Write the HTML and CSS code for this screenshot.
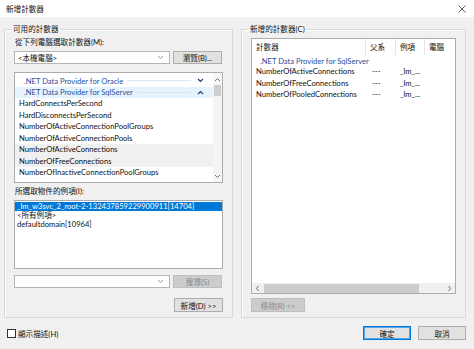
FILE: index.html
```html
<!DOCTYPE html>
<html lang="zh-Hant">
<head>
	<meta charset="UTF-8">
	<title>新增計數器</title>
	<link rel="stylesheet" href="styles.css">
</head>
<body>
	<div class="titlebar">
		<span>新增計數器</span>
		<svg class="close" width="8" height="8" viewBox="0 0 8 8"><path d="M0.5 0.5L7.5 7.5M7.5 0.5L0.5 7.5" stroke="#333" stroke-width="0.8"/></svg>
	</div>

	<div class="main">
		<!-- 左邊：可用的計數器 -->
		<fieldset class="group group-left">
			<legend>可用的計數器</legend>
			<div class="label first">從下列電腦選取計數器(M):</div>
			<div class="row">
				<div class="combo">
					<span>&lt;本機電腦&gt;</span>
					<svg width="7" height="5" viewBox="0 0 7 5"><path d="M1 1L3.5 3.5L6 1" fill="none" stroke="#777" stroke-width="0.8"/></svg>
				</div>
				<div class="btn">瀏覽(B)...</div>
			</div>

			<div class="counters">
				<div class="rows">
					<div class="ghead">
						<span>.NET Data Provider for Oracle</span>
						<i class="gline"></i>
						<svg width="7" height="5" viewBox="0 0 7 5"><path d="M1 1L3.5 3.5L6 1" fill="none" stroke="#1e3a70" stroke-width="1.1"/></svg>
					</div>
					<div class="ghead hover">
						<span>.NET Data Provider for SqlServer</span>
						<i class="gline"></i>
						<svg width="7" height="5" viewBox="0 0 7 5"><path d="M1 4L3.5 1.5L6 4" fill="none" stroke="#1e3a70" stroke-width="1.1"/></svg>
					</div>
					<div class="item">HardConnectsPerSecond</div>
					<div class="item">HardDisconnectsPerSecond</div>
					<div class="item">NumberOfActiveConnectionPoolGroups</div>
					<div class="item">NumberOfActiveConnectionPools</div>
					<div class="item sel">NumberOfActiveConnections</div>
					<div class="item sel">NumberOfFreeConnections</div>
					<div class="item">NumberOfInactiveConnectionPoolGroups</div>
				</div>
				<div class="vscroll">
					<svg width="7" height="5" viewBox="0 0 7 5"><path d="M1 4L3.5 1.5L6 4" fill="none" stroke="#606060" stroke-width="0.9"/></svg>
					<div class="vthumb"></div>
					<div class="vtrack"></div>
					<svg width="7" height="5" viewBox="0 0 7 5"><path d="M1 1L3.5 3.5L6 1" fill="none" stroke="#606060" stroke-width="0.9"/></svg>
				</div>
			</div>

			<div class="label">所選取物件的例項(I):</div>
			<div class="instances">
				<div class="inst active">_lm_w3svc_2_root-2-132437859229900911[14704]</div>
				<div class="inst">&lt;所有例項&gt;</div>
				<div class="inst">defaultdomain[10964]</div>
			</div>

			<div class="row search">
				<div class="combo">
					<span></span>
					<svg width="7" height="5" viewBox="0 0 7 5"><path d="M1 1L3.5 3.5L6 1" fill="none" stroke="#777" stroke-width="0.8"/></svg>
				</div>
				<div class="btn disabled">搜尋(S)</div>
			</div>

			<div class="row end">
				<div class="btn tall">新增(D) &gt;&gt;</div>
			</div>
		</fieldset>

		<!-- 右邊：新增的計數器 -->
		<fieldset class="group group-right">
			<legend>新增的計數器(C)</legend>
			<div class="added">
				<div class="head">
					<div class="col c1">計數器</div>
					<div class="col c2">父系</div>
					<div class="col c3">例項</div>
					<div class="col c4">電腦</div>
				</div>
				<div class="ghead small">
					<span>.NET Data Provider for SqlServer</span>
					<i class="gline"></i>
				</div>
				<div class="arow"><span class="c1">NumberOfActiveConnections</span><span class="c2">---</span><span class="c3">_lm_...</span></div>
				<div class="arow"><span class="c1">NumberOfFreeConnections</span><span class="c2">---</span><span class="c3">_lm_...</span></div>
				<div class="arow"><span class="c1">NumberOfPooledConnections</span><span class="c2">---</span><span class="c3">_lm_...</span></div>
				<div class="hscroll">
					<svg width="5" height="7" viewBox="0 0 5 7"><path d="M3.5 1L1.5 3.5L3.5 6" fill="none" stroke="#606060" stroke-width="0.9"/></svg>
					<div class="hthumb"></div>
					<svg width="5" height="7" viewBox="0 0 5 7"><path d="M1.5 1L3.5 3.5L1.5 6" fill="none" stroke="#606060" stroke-width="0.9"/></svg>
				</div>
			</div>
			<div class="row">
				<div class="btn tall disabled wide">移除(R) &lt;&lt;</div>
			</div>
		</fieldset>
	</div>

	<div class="footer">
		<label class="check"><span class="box"></span>顯示描述(H)</label>
		<div class="btn foot default">確定</div>
		<div class="btn foot">取消</div>
	</div>
</body>
</html>
```

FILE: styles.css
```css
*{
	margin:0;
	padding:0;
	box-sizing:border-box;
}
body{
	width:474px;
	height:349px;
	background:#f0f0f0;
	font-family:Lato, "Noto Sans CJK TC", sans-serif;
	font-size:7.6px;
	color:#111;
	overflow:hidden;
	white-space:nowrap;
}
.titlebar{
	height:17px;
	background:#fff;
	display:flex;
	align-items:center;
	justify-content:space-between;
	padding:0 8px 0 6px;
}
.main{
	display:flex;
	gap:8px;
	padding:7px 8px 0 4px;
}
.group{
	border:1px solid #d9d9d9;
	box-shadow:inset 1px 1px 0 #fff;
	padding:0 9px 5px;
	min-width:0;
}
.group legend{
	margin-left:-2px;
	padding:0 1px;
	line-height:11px;
}
.group-left{
	width:229px;
}
.group-right{
	flex:1;
	display:flex;
	flex-direction:column;
}
.label{
	line-height:11px;
	margin-top:3px;
	padding-left:1px;
}
.label.first{
	margin-top:2px;
}
.row{
	display:flex;
	gap:3px;
	margin-top:3px;
}
.row.search{
	margin-top:6px;
}
.row.end{
	justify-content:flex-end;
	margin-top:10px;
}
.combo{
	width:156px;
	height:13px;
	background:#fff;
	border:1px solid #b4b4b4;
	display:flex;
	align-items:center;
	justify-content:space-between;
	padding:0 5px 0 3px;
}
.btn{
	width:49px;
	height:13px;
	background:#e1e1e1;
	border:1px solid #adadad;
	display:flex;
	align-items:center;
	justify-content:center;
}
.btn.tall{
	height:14px;
}
.btn.disabled{
	background:#cccccc;
	border-color:#bfbfbf;
	color:#8a8a8a;
}
.btn.wide{
	width:54px;
}

/* 計數器清單 */
.counters{
	margin-top:8px;
	height:111px;
	background:#fff;
	border:1px solid #acacac;
	display:flex;
}
.rows{
	flex:1;
	padding-top:2px;
}
.ghead{
	height:11.5px;
	display:flex;
	align-items:center;
	padding:0 8px 0 8px;
	color:#2a4f9c;
	border:1px solid transparent;
}
.ghead.hover{
	background:#e5f3ff;
	border-color:#e5f3ff;
}
.gline{
	flex:1;
	height:1px;
	background:#dfe4ee;
	margin:0 6px 0 4px;
}
.item{
	height:11.5px;
	line-height:11.5px;
	padding-left:4px;
}
.item.sel{
	background:#f0f0f0;
}
.vscroll{
	width:9px;
	background:#f5f5f5;
	display:flex;
	flex-direction:column;
	align-items:center;
	padding:4px 0 3px;
}
.vthumb{
	width:7px;
	height:11px;
	margin-top:3px;
	background:#cdcdcd;
}
.vtrack{
	flex:1;
}

/* 例項清單 */
.instances{
	margin-top:3px;
	height:69px;
	background:#fff;
	border:1px solid #acacac;
	padding-top:1px;
}
.inst{
	height:9px;
	line-height:9px;
	padding-left:2px;
}
.inst.active{
	background:#0078d7;
	color:#fff;
}

/* 新增的計數器清單 */
.added{
	flex:1;
	margin-top:3px;
	background:#fff;
	border:1px solid #acacac;
	display:flex;
	flex-direction:column;
}
.head{
	display:flex;
	height:16px;
	align-items:center;
}
.col{
	height:16px;
	line-height:16px;
	padding-left:4px;
	border-right:1px solid #e5e5e5;
}
.c1{
	width:114px;
}
.c2{
	width:30px;
}
.c3{
	width:29px;
}
.c4{
	flex:1;
	border-right:none;
}
.ghead.small{
	width:114px;
	height:11px;
	padding:0 0 0 7px;
}
.ghead.small span{
	flex-shrink:0;
}
.ghead.small .gline{
	margin:0 0 0 3px;
}
.arow{
	display:flex;
	height:11.5px;
	line-height:11.5px;
}
.arow span{
	padding-left:4px;
}
.arow .c2{
	padding-left:6px;
}
.hscroll{
	margin-top:auto;
	height:10px;
	background:#f0f0f0;
	display:flex;
	align-items:center;
	padding:0 3px;
	gap:4px;
}
.hthumb{
	width:155px;
	height:9px;
	background:#cdcdcd;
	margin-right:auto;
}

.group-right .row{
	margin-top:4px;
}

/* 底部 */
.footer{
	display:flex;
	align-items:center;
	gap:7px;
	padding:0 8px 0 7px;
	margin-top:8px;
}
.check{
	display:flex;
	align-items:center;
	gap:2px;
	margin-right:auto;
}
.box{
	width:9px;
	height:9px;
	background:#fff;
	border:1px solid #333;
}
.btn.foot{
	width:48px;
	height:14px;
}
.btn.default{
	border-color:#0078d7;
	box-shadow:inset 0 0 0 1px #5aa5e6;
}
```
